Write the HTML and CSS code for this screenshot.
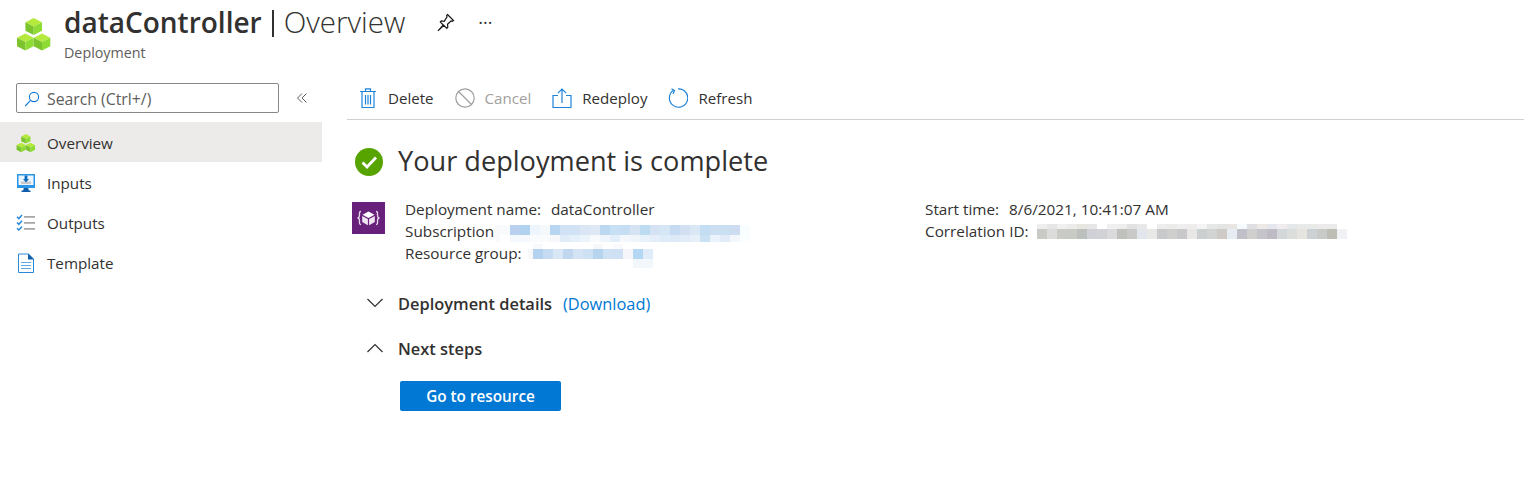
FILE: index.html
```html
<!DOCTYPE html>
<html lang="en">
<head>
<meta charset="utf-8">
<title>dataController | Overview</title>
<link rel="stylesheet" href="styles.css">
</head>
<body>
<svg class="defs" width="0" height="0" aria-hidden="true">
  <symbol id="cubes" viewBox="0 0 36 36">
    <path fill="#b5ea3c" d="M17.7 2l8.3 4.3-8.3 4.2-8.3-4.2z"/><path fill="#7cc42d" d="M9.4 6.3l8.3 4.2v8.6l-8.3-4.3z"/><path fill="#8edb33" d="M26 6.3l-8.3 4.2v8.6l8.3-4.3z"/>
    <path fill="#b5ea3c" d="M9.3 17.5l8.3 4.3-8.3 4.2L1 21.800z"/><path fill="#7cc42d" d="M1 21.800l8.300 4.200v8.500L1 30.300z"/><path fill="#8edb33" d="M17.600 21.800L9.300 26v8.500l8.300-4.200z"/>
    <path fill="#b5ea3c" d="M26 17.500l8.300 4.300-8.300 4.200-8.300-4.200z"/><path fill="#7cc42d" d="M17.700 21.800l8.300 4.200v8.500l-8.300-4.200z"/><path fill="#8edb33" d="M34.300 21.800L26 26v8.500l8.300-4.200z"/>
  </symbol>
</svg>

<header class="page-head">
  <svg class="head-icon" width="36" height="36"><use href="#cubes"/></svg>
  <div class="head-titles">
    <div class="title-row">
      <h1 class="title"><span class="title-strong">dataController</span><span class="title-sep"></span><span class="title-light">Overview</span></h1>
      <svg class="pin" width="20" height="20" viewBox="0 0 20 20" fill="none" stroke="#1b1a19" stroke-width="1.200"><path d="M11.500 2.500l6 6-1 .8-1.500-.3-3.500 3.300.3 3-1 1-3-3-5.800 5.500 5.300-5.800-3-3 1-1 3 .3L11 4.900l-.3-1.500z"/></svg>
      <span class="more">···</span>
    </div>
    <div class="subtitle">Deployment</div>
  </div>
</header>

<div class="layout">
  <aside class="sidebar">
    <div class="search-row">
      <div class="search">
        <svg width="16" height="16" viewBox="0 0 16 16" fill="none" stroke="#0f78d4" stroke-width="1.100"><circle cx="10" cy="6" r="4.600"/><path d="M6.600 9.400L1.200 15"/></svg>
        <span>Search (Ctrl+/)</span>
      </div>
      <svg class="collapse" width="12" height="12" viewBox="0 0 12 12" fill="none" stroke="#605e5c" stroke-width="1"><path d="M6 1.500L1.500 6 6 10.500M10.500 1.500L6 6l4.500 4.500"/></svg>
    </div>
    <nav class="nav">
      <a class="nav-item active"><svg width="20" height="20"><use href="#cubes"/></svg>Overview</a>
      <a class="nav-item">
        <svg width="20" height="20" viewBox="0 0 20 20"><path fill="#2b96e8" d="M1 1h18v14H1z"/><path fill="#eaf4fc" d="M2.500 2.500h15v9.500h-15z"/><path fill="#c8c8c8" d="M5 8.500h10V11H5z"/><path fill="#0f6cbd" d="M8.600 2.500h2.800V6H13l-3 3.500L7 6h1.600z"/><path fill="#0f5ca8" d="M7.800 15h4.400l.6 2.500H7.200zM5.500 17.500h9V19h-9z"/></svg>
        Inputs
      </a>
      <a class="nav-item">
        <svg width="20" height="20" viewBox="0 0 20 20"><g fill="none" stroke="#2b88d8" stroke-width="1.500"><path d="M1 3.800l1.800 1.800L6 2M1 9.500l1.800 1.800L6 7.700M1 15.200L2.800 17 6 13.400"/></g><g fill="#a6a6a6"><path d="M8 3h11v1.700H8zM8 9h11v1.700H8zM8 15h11v1.700H8z"/></g></svg>
        Outputs
      </a>
      <a class="nav-item">
        <svg width="20" height="20" viewBox="0 0 20 20"><path fill="#fff" stroke="#2b88d8" d="M2.500 1h10l5 5v13.500h-15z"/><path fill="#0f5ca8" d="M12 .5l6 6h-6z"/><path fill="#5ea9e6" d="M5 9h10v1H5zM5 12h10v1H5zM5 15h10v1H5z"/></svg>
        Template
      </a>
    </nav>
  </aside>

  <main class="content">
    <div class="toolbar">
      <button class="tool">
        <svg width="20" height="20" viewBox="0 0 20 20" fill="none" stroke="#1e83d8" stroke-width="1.200"><path d="M2 3.500h16M4 3.500v16h12v-16M7.500 3.500V.8h5v2.700M7.500 7v9.500M10 7v9.500M12.500 7v9.500"/></svg>
        <span>Delete</span>
      </button>
      <button class="tool disabled">
        <svg width="20" height="20" viewBox="0 0 20 20" fill="none" stroke="#a19f9d" stroke-width="1.200"><circle cx="10" cy="10" r="9.200"/><path d="M3.500 3.500l13 13"/></svg>
        <span>Cancel</span>
      </button>
      <button class="tool">
        <svg width="20" height="20" viewBox="0 0 20 20" fill="none" stroke="#1e83d8" stroke-width="1.200"><path d="M6 7.500H1v12h18v-12h-5M10 15V1M5.800 5.200L10 1l4.200 4.200"/></svg>
        <span>Redeploy</span>
      </button>
      <button class="tool">
        <svg width="20" height="20" viewBox="0 0 20 20" fill="none" stroke="#1e83d8" stroke-width="1.200"><path d="M5.500 2.300a9.200 9.200 0 1 0 4.500-1.500"/><path d="M3.500 .8L6.500 2.600 5 6"/></svg>
        <span>Refresh</span>
      </button>
    </div>

    <div class="status">
      <svg width="28" height="28" viewBox="0 0 28 28"><circle cx="14" cy="14" r="14" fill="#57a300"/><path d="M7.500 14.500l4.500 4.500 9-9.500" fill="none" stroke="#fff" stroke-width="2.800"/></svg>
      <h2 class="status-text">Your deployment is complete</h2>
    </div>

    <section class="summary">
      <div class="resource-icon">
        <svg width="33" height="32" viewBox="0 0 33 32"><rect width="33" height="32" fill="#68217a"/><g fill="none" stroke="#e5d5ea" stroke-width="1.300"><path d="M9 9.500c-2 0-1.500 2-1.500 3.500s-.5 3-2 3c1.500 0 2 1.500 2 3s-.5 3.500 1.500 3.500M24 9.500c2 0 1.500 2 1.500 3.500s.5 3 2 3c-1.500 0-2 1.500-2 3s.5 3.500-1.500 3.500"/></g><path fill="#fff" d="M16.500 9.500l6 3.200-6 3.200-6-3.200z"/><path fill="#efe4f2" d="M10.200 14l5.700 3v6.200l-5.700-3.200zM22.800 14l-5.700 3v6.200l5.700-3.200z"/></svg>
      </div>
      <div class="summary-col left">
        <div class="row">Deployment name:<span class="value">dataController</span></div>
        <div class="row row-blur">Subscription:
          <svg class="blur sub" width="255" height="18" shape-rendering="crispEdges">
            <rect x="0" width="5" height="10" fill="#f7f9fb"/><rect x="5" width="10" height="10" fill="#f8fafc"/><rect x="15" width="10" height="10" fill="#b9d1ee"/><rect x="25" width="10" height="10" fill="#b2d3ef"/><rect x="35" width="10" height="10" fill="#eef5fc"/><rect x="45" width="10" height="10" fill="#f5f9fc"/><rect x="55" width="10" height="10" fill="#b8d5f1"/><rect x="65" width="20" height="10" fill="#d0e2f4"/><rect x="85" width="10" height="10" fill="#dae6f3"/><rect x="95" width="10" height="10" fill="#dfe9f5"/><rect x="105" width="10" height="10" fill="#bcd7f0"/><rect x="115" width="10" height="10" fill="#c8e0f4"/><rect x="125" width="10" height="10" fill="#c5def3"/><rect x="135" width="10" height="10" fill="#d5e3f3"/><rect x="145" width="10" height="10" fill="#bddcf2"/><rect x="155" width="10" height="10" fill="#d5e2f3"/><rect x="165" width="10" height="10" fill="#d5e6f5"/><rect x="175" width="10" height="10" fill="#c6daf2"/><rect x="185" width="10" height="10" fill="#d2e0f2"/><rect x="195" width="10" height="10" fill="#dae8f6"/><rect x="205" width="10" height="10" fill="#c3def2"/><rect x="215" width="10" height="10" fill="#ccdff2"/><rect x="225" width="10" height="10" fill="#cbdff2"/><rect x="235" width="10" height="10" fill="#cddcf0"/><rect x="245" width="10" height="10" fill="#f8fdff"/>
            <rect x="0" y="10" width="5" height="7" fill="#f7f9fb"/><rect x="15" y="10" width="10" height="7" fill="#f5f8fc"/><rect x="25" y="10" width="10" height="7" fill="#f5f9fd"/><rect x="35" y="10" width="20" height="7" fill="#f9fbfd"/><rect x="55" y="10" width="10" height="7" fill="#f5f7fa"/><rect x="65" y="10" width="10" height="7" fill="#e0edf9"/><rect x="75" y="10" width="10" height="7" fill="#e6f0fa"/><rect x="85" y="10" width="10" height="7" fill="#ebf3fb"/><rect x="95" y="10" width="10" height="7" fill="#f8fafd"/><rect x="105" y="10" width="10" height="7" fill="#f0f5fb"/><rect x="115" y="10" width="10" height="7" fill="#e2eef9"/><rect x="125" y="10" width="10" height="7" fill="#f4f8fc"/><rect x="135" y="10" width="10" height="7" fill="#eff5fb"/><rect x="145" y="10" width="10" height="7" fill="#e9f2fb"/><rect x="155" y="10" width="10" height="7" fill="#e3eefa"/><rect x="165" y="10" width="10" height="7" fill="#deebf9"/><rect x="175" y="10" width="10" height="7" fill="#dde9f7"/><rect x="185" y="10" width="10" height="7" fill="#e2ecf8"/><rect x="195" y="10" width="10" height="7" fill="#e7f0f9"/><rect x="205" y="10" width="10" height="7" fill="#cae1f3"/><rect x="215" y="10" width="10" height="7" fill="#eaf3fb"/><rect x="225" y="10" width="10" height="7" fill="#e1ecf8"/><rect x="235" y="10" width="10" height="7" fill="#f3f6fa"/><rect x="245" y="10" width="10" height="7" fill="#fbfeff"/>
          </svg>
        </div>
        <div class="row row-blur">Resource group:
          <svg class="blur res" width="125" height="24" shape-rendering="crispEdges">
            <rect x="5" width="10" height="5" fill="#f7f9fd"/><rect x="65" width="10" height="5" fill="#f6f8fc"/><rect x="85" width="10" height="5" fill="#fafafd"/>
            <rect x="0" y="5" width="5" height="10" fill="#f7f7fa"/><rect x="5" y="5" width="10" height="10" fill="#b4d1f0"/><rect x="15" y="5" width="10" height="10" fill="#c6dcf2"/><rect x="25" y="5" width="10" height="10" fill="#d8e6f5"/><rect x="35" y="5" width="10" height="10" fill="#c0d7ef"/><rect x="45" y="5" width="10" height="10" fill="#d5e4f5"/><rect x="55" y="5" width="10" height="10" fill="#cde0f4"/><rect x="65" y="5" width="10" height="10" fill="#b7d4ef"/><rect x="75" y="5" width="10" height="10" fill="#cfe2f4"/><rect x="85" y="5" width="10" height="10" fill="#cfe0f4"/><rect x="95" y="5" width="10" height="10" fill="#f5f5fa"/><rect x="105" y="5" width="10" height="10" fill="#b4d8f3"/><rect x="115" y="5" width="10" height="10" fill="#e0ecf9"/>
            <rect x="105" y="15" width="20" height="9" fill="#f2f7fb"/>
          </svg>
        </div>
      </div>
      <div class="summary-col right">
        <div class="row">Start time:<span class="value">8/6/2021, 10:41:07 AM</span></div>
        <div class="row row-blur">Correlation ID:
          <svg class="blur cor" width="310" height="15" shape-rendering="crispEdges">
            <rect x="0" width="10" height="5" fill="#eeeeee"/><rect x="10" width="10" height="5" fill="#e6e6e6"/><rect x="20" width="10" height="5" fill="#f0f0f0"/><rect x="30" width="10" height="5" fill="#ebebeb"/><rect x="40" width="10" height="5" fill="#e8e6e0"/><rect x="50" width="10" height="5" fill="#e6e6e6"/><rect x="70" width="10" height="5" fill="#f0f0f0"/><rect x="80" width="10" height="5" fill="#eeeeee"/><rect x="90" width="10" height="5" fill="#e2e2e2"/><rect x="100" width="10" height="5" fill="#e8e8e8"/><rect x="120" width="10" height="5" fill="#ededed"/><rect x="130" width="10" height="5" fill="#ebebe9"/><rect x="140" width="10" height="5" fill="#eeeeee"/><rect x="150" width="10" height="5" fill="#efecec"/><rect x="160" width="10" height="5" fill="#f5f3f3"/><rect x="170" width="10" height="5" fill="#e6e8e8"/><rect x="180" width="10" height="5" fill="#e3e4e4"/><rect x="190" width="10" height="5" fill="#e8e5e2"/><rect x="200" width="10" height="5" fill="#f5fafd"/><rect x="210" width="10" height="5" fill="#e0e0e4"/><rect x="220" width="10" height="5" fill="#ede9e6"/><rect x="230" width="10" height="5" fill="#e6e6ee"/><rect x="240" width="10" height="5" fill="#f3ecee"/><rect x="250" width="10" height="5" fill="#e4e8ea"/><rect x="260" width="10" height="5" fill="#e8eaea"/><rect x="270" width="10" height="5" fill="#e8eae8"/><rect x="280" width="10" height="5" fill="#eceaea"/><rect x="290" width="10" height="5" fill="#ebebeb"/>
            <rect x="0" y="5" width="10" height="10" fill="#c9cac6"/><rect x="10" y="5" width="10" height="10" fill="#dcdcda"/><rect x="20" y="5" width="10" height="10" fill="#c9c9c5"/><rect x="30" y="5" width="10" height="10" fill="#c8cac4"/><rect x="40" y="5" width="10" height="10" fill="#bcc0bd"/><rect x="50" y="5" width="10" height="10" fill="#d0d1d6"/><rect x="60" y="5" width="10" height="10" fill="#d0d2d6"/><rect x="70" y="5" width="10" height="10" fill="#dadadd"/><rect x="80" y="5" width="10" height="10" fill="#bfc1bd"/><rect x="90" y="5" width="10" height="10" fill="#c9cac8"/><rect x="100" y="5" width="10" height="10" fill="#e2e6ec"/><rect x="110" y="5" width="10" height="10" fill="#e8e8e6"/><rect x="120" y="5" width="10" height="10" fill="#c8c9cb"/><rect x="130" y="5" width="10" height="10" fill="#cfd0ce"/><rect x="140" y="5" width="10" height="10" fill="#c8c7c9"/><rect x="150" y="5" width="10" height="10" fill="#e8e7e5"/><rect x="160" y="5" width="10" height="10" fill="#cacfcf"/><rect x="170" y="5" width="10" height="10" fill="#d2d3d3"/><rect x="180" y="5" width="10" height="10" fill="#cfcac6"/><rect x="190" y="5" width="10" height="10" fill="#e6edf2"/><rect x="200" y="5" width="10" height="10" fill="#c1bfc7"/><rect x="210" y="5" width="10" height="10" fill="#d0cfce"/><rect x="220" y="5" width="10" height="10" fill="#c6c4cb"/><rect x="230" y="5" width="10" height="10" fill="#bfbbc5"/><rect x="240" y="5" width="10" height="10" fill="#d2d7da"/><rect x="250" y="5" width="10" height="10" fill="#dcdedc"/><rect x="260" y="5" width="10" height="10" fill="#e6e4de"/><rect x="270" y="5" width="10" height="10" fill="#ccd2d4"/><rect x="280" y="5" width="10" height="10" fill="#c8cac8"/><rect x="290" y="5" width="10" height="10" fill="#bdbdb6"/><rect x="300" y="5" width="10" height="10" fill="#f0f2f6"/>
          </svg>
        </div>
      </div>
    </section>

    <div class="section-head first">
      <svg width="16" height="10" viewBox="0 0 16 10" fill="none" stroke="#323130" stroke-width="1.200"><path d="M.5 1l7.500 7.500L15.500 1"/></svg>
      <strong>Deployment details</strong>
      <a class="link">(Download)</a>
    </div>
    <div class="section-head second">
      <svg width="16" height="10" viewBox="0 0 16 10" fill="none" stroke="#323130" stroke-width="1.200"><path d="M.5 9L8 1.500 15.500 9"/></svg>
      <strong>Next steps</strong>
    </div>
    <button class="primary">Go to resource</button>
  </main>
</div>
</body>
</html>
```

FILE: styles.css
```css
* { box-sizing: border-box; }
html, body { margin: 0; padding: 0; }
body {
  width: 1524px;
  height: 491px;
  overflow: hidden;
  background: #fff;
  color: #323130;
  font-family: "Open Sans", "Noto Sans", sans-serif;
  font-size: 15px;
}
.defs { position: absolute; }
svg { display: block; flex: none; }

.page-head { display: flex; height: 83px; padding: 0 0 0 16px; }
.head-icon { margin-top: 16px; }
.head-titles { margin-left: 12px; padding-top: 3px; }
.title-row { display: flex; align-items: center; height: 38px; }
.title { display: flex; align-items: center; margin: 0; font-size: 28px; font-weight: 400; color: #323130; line-height: 38px; white-space: nowrap; }
.title-strong { font-weight: 600; }
.title-sep { width: 2px; height: 27px; margin: 3px 10px 0 10px; background: #323130; }
.title-light { font-weight: 300; font-size: 29.500px; }
.pin { margin-left: 31px; }
.more { margin-left: 22px; font-size: 18px; color: #323130; }
.subtitle { font-size: 14.300px; color: #605e5c; line-height: 18px; margin-top: 3px; }

.layout { display: flex; }
.sidebar { width: 322px; flex: none; }
.search-row { display: flex; align-items: center; height: 39px; padding: 0 0 9px 16px; }
.search { width: 263px; height: 30px; border: 1px solid #8a8886; border-radius: 2px; display: flex; align-items: center; gap: 7px; padding: 1px 0 0 7px; color: #605e5c; font-size: 15.800px; }
.collapse { margin-left: 17px; }
.nav-item { display: flex; align-items: center; gap: 11px; height: 40px; padding: 1px 0 0 16px; color: #323130; font-size: 15.200px; }
.nav-item.active { background: #edebe9; }

.content { flex: 1; margin-left: 25px; }
.toolbar { display: flex; align-items: center; gap: 21px; height: 37px; padding: 0 0 7px 11px; border-bottom: 1px solid #d2d0ce; }
.tool { display: flex; align-items: center; gap: 10px; padding: 0; border: 0; background: none; font: inherit; color: #323130; font-size: 15.100px; }
.tool.disabled { color: #a19f9d; }

.status { display: flex; align-items: center; gap: 15px; margin-top: 26px; padding-left: 8px; height: 32px; }
.status-text { margin: -2px 0 0; font-size: 27.150px; font-weight: 400; line-height: 32px; color: #323130; }

.summary { display: flex; margin-top: 20px; padding-left: 5px; }
.resource-icon { width: 53px; flex: none; padding-top: 4px; }
.summary-col { font-size: 15.300px; }
.summary-col.left { width: 520px; flex: none; }
.row { height: 22px; line-height: 22px; white-space: nowrap; }
.value { margin-left: 10px; }
.row-blur { position: relative; }
.blur { position: absolute; }
.blur.sub { left: 90px; top: 5px; }
.blur.res { left: 123px; top: 2px; }
.blur.cor { left: 112px; top: 4px; }

.section-head { display: flex; align-items: center; height: 24px; padding-left: 20px; font-size: 16.400px; }
.section-head strong { margin-left: 15px; font-weight: 600; }
.section-head.first { margin-top: 27px; }
.section-head.second { margin-top: 21px; }
.link { margin-left: 11px; color: #0078d4; }
.primary { display: block; margin: 21px 0 0 53px; width: 161px; height: 30px; border: 0; border-radius: 2px; background: #0078d4; color: #fff; font: inherit; font-size: 15.300px; font-weight: 600; }
```
